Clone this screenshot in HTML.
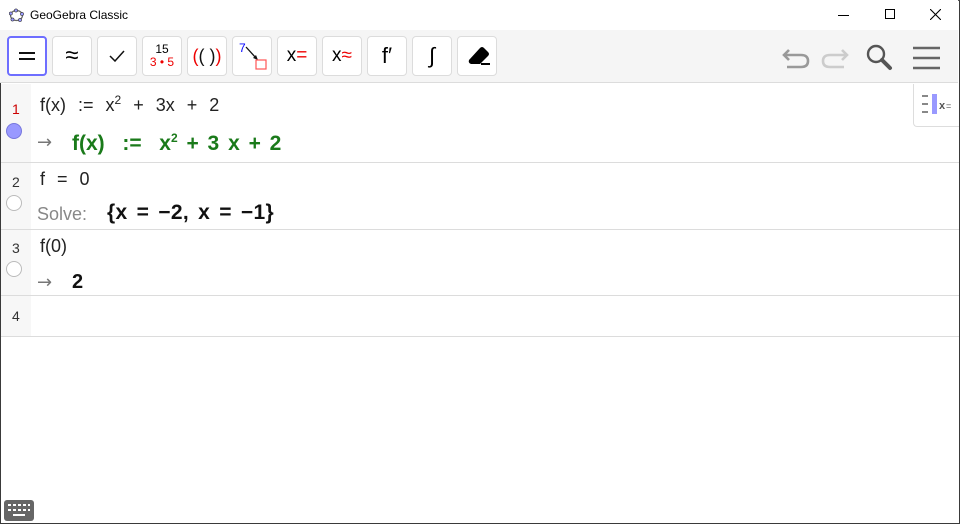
<!DOCTYPE html>
<html><head><meta charset="utf-8"><style>
*{margin:0;padding:0;box-sizing:border-box}
body{width:960px;height:524px;overflow:hidden;background:#fff;font-family:"Liberation Sans",sans-serif;position:relative}
.win{position:absolute;left:0;top:0;width:960px;height:524px;border:1px solid #3a3a3a;border-top-color:#555}
.title{position:absolute;left:0;top:0;width:958px;height:30px;background:#fff}
.title span{position:absolute;left:30px;top:8px;font-size:12px;color:#000}
.tb{position:absolute;left:0;top:30px;width:958px;height:53px;background:#f5f5f5;border-bottom:1px solid #dcdcdc}
.b{position:absolute;top:6px;width:40px;height:40px;border:1px solid #dcdcdc;border-radius:4px;background:#fff;display:flex;align-items:center;justify-content:center;font-size:19px}
.b.sel{border:2px solid #6e6eff}
.gut{position:absolute;left:1px;top:84px;width:30px;height:252px;background:#f7f7f7}
.row{position:absolute;left:1px;width:958px;border-bottom:1px solid #dcdcdc}
.num{position:absolute;left:11px;font-size:14px;color:#333}
.t{position:absolute;left:39px;font-size:18px;color:#222;white-space:pre}
.circ{position:absolute;left:5px;width:16px;height:16px;border-radius:50%;border:1px solid #bbb;background:#fff}
.arr{position:absolute;left:36px;font-size:18px;color:#777;font-family:"DejaVu Sans",sans-serif}
sup{font-size:12px}
</style></head><body>
<div class="win"></div>
<div class="title">
<svg style="position:absolute;left:9px;top:8px" width="15" height="14" viewBox="0 0 15 14"><ellipse cx="7.5" cy="7.5" rx="6" ry="5" fill="none" stroke="#666" stroke-width="1.2"/><g fill="#99f" stroke="#333" stroke-width=".6"><circle cx="7" cy="2.5" r="1.6"/><circle cx="13" cy="6" r="1.6"/><circle cx="11" cy="12" r="1.6"/><circle cx="3.5" cy="11.5" r="1.6"/><circle cx="1.8" cy="5.5" r="1.6"/></g></svg>
<span>GeoGebra Classic</span>
<div style="position:absolute;left:838px;top:15px;width:11px;height:1px;background:#000"></div>
<div style="position:absolute;left:885px;top:9px;width:10px;height:10px;border:1px solid #000"></div>
<svg style="position:absolute;left:930px;top:9px" width="11" height="11"><path d="M0 0L11 11M11 0L0 11" stroke="#000" stroke-width="1.1"/></svg>
</div>
<div class="tb">
<div class="b sel" style="left:7px"><svg width="18" height="10"><path d="M1 2H17M1 8H17" stroke="#111" stroke-width="2"/></svg></div>
<div class="b" style="left:52px;font-size:24px">≈</div>
<div class="b" style="left:97px"><svg width="16" height="12"><path d="M1 6L6 11L15 1" fill="none" stroke="#111" stroke-width="1.5"/></svg></div>
<div class="b" style="left:142px;flex-direction:column;font-size:12px;line-height:13px"><span>15</span><span style="color:#e00">3 • 5</span></div>
<div class="b" style="left:187px;color:#e00;font-size:18px">(<span style="color:#111">( )</span>)</div>
<div class="b" style="left:232px"><svg width="40" height="40"><text x="6" y="16" font-size="12" fill="#00f" font-family="Liberation Sans">7</text><path d="M13 11L23 22" stroke="#111" stroke-width="1.3"/><path d="M20 22L25 24L23 19Z" fill="#111"/><rect x="23" y="24" width="10" height="9" fill="none" stroke="#f55" stroke-width="1.2"/></svg></div>
<div class="b" style="left:277px">x<span style="color:#e00">=</span></div>
<div class="b" style="left:322px">x<span style="color:#e00">≈</span></div>
<div class="b" style="left:367px;font-size:22px">f′</div>
<div class="b" style="left:412px;font-size:22px">∫</div>
<div class="b" style="left:457px"><svg width="32" height="26"><path d="M8 17L19 5Q21 3 23 5L27 9Q29 11 27 13L19 21H10Q7 20 8 17Z" fill="#000"/><path d="M20 21H29" stroke="#000" stroke-width="2"/></svg></div>
<svg style="position:absolute;left:781px;top:15px" width="32" height="26"><path d="M8 5L3 10L8 15M3 10H20Q27 10 27 16Q27 22 20 22H6" fill="none" stroke="#999" stroke-width="2.6"/></svg>
<svg style="position:absolute;left:818px;top:15px" width="32" height="26"><path d="M24 5L29 10L24 15M29 10H12Q5 10 5 16Q5 22 12 22H26" fill="none" stroke="#ccc" stroke-width="2.6"/></svg>
<svg style="position:absolute;left:864px;top:13px" width="32" height="30"><circle cx="12" cy="11" r="8" fill="none" stroke="#555" stroke-width="2.4"/><path d="M18 17L26 25" stroke="#555" stroke-width="4" stroke-linecap="round"/></svg>
<svg style="position:absolute;left:912px;top:16px" width="30" height="24"><path d="M1 2H28M1 12H28M1 22H28" stroke="#666" stroke-width="2.6"/></svg>
</div>
<div class="gut"></div>
<div style="position:absolute;left:913px;top:84px;width:46px;height:43px;background:#fff;border-left:1px solid #ddd;border-bottom:1px solid #ddd;border-radius:0 0 0 4px"><svg width="46" height="43"><path d="M8 12H14M8 20H14M8 28H14" stroke="#888" stroke-width="2"/><rect x="18" y="10" width="5" height="20" fill="#99f"/><text x="25" y="25" font-size="11" font-weight="bold" fill="#555" font-family="Liberation Sans">x</text><text x="32" y="25" font-size="9" fill="#555" font-family="Liberation Sans">=</text></svg></div>
<div class="row" style="top:84px;height:79px">
<div class="num" style="top:17px;color:#c00">1</div>
<div class="circ" style="top:39px;background:#99f;border-color:#77d"></div>
<div class="t" style="top:9px;word-spacing:1px">f(x)  :=  x<sup>2</sup>  +  3x  +  2</div>
<div class="arr" style="top:48px">→</div>
<div class="t" style="top:47px;left:71px;color:#1a7a1a;font-weight:bold;font-size:21px;word-spacing:3px">f(x)  :=  x<sup>2</sup> + 3 x + 2</div>
</div>
<div class="row" style="top:163px;height:67px">
<div class="num" style="top:11px">2</div>
<div class="circ" style="top:32px"></div>
<div class="t" style="top:6px;word-spacing:1px">f  =  0</div>
<div class="t" style="top:41px;left:36px;color:#888">Solve:</div>
<div class="t" style="top:38px;left:106px;color:#111;font-weight:bold;font-size:21px;word-spacing:3px;letter-spacing:.3px">{x = −2, x = −1}</div>
</div>
<div class="row" style="top:230px;height:66px">
<div class="num" style="top:10px">3</div>
<div class="circ" style="top:31px"></div>
<div class="t" style="top:6px">f(0)</div>
<div class="arr" style="top:42px">→</div>
<div class="t" style="top:41px;left:71px;font-weight:bold;font-size:20px;color:#111">2</div>
</div>
<div class="row" style="top:296px;height:41px">
<div class="num" style="top:12px">4</div>
</div>
<div style="position:absolute;left:4px;top:500px;width:30px;height:21px;background:#666;border-radius:3px"><svg width="30" height="21"><g fill="#fff"><rect x="4" y="4" width="3" height="2"/><rect x="9" y="4" width="3" height="2"/><rect x="14" y="4" width="3" height="2"/><rect x="19" y="4" width="3" height="2"/><rect x="24" y="4" width="2" height="2"/><rect x="4" y="9" width="3" height="2"/><rect x="9" y="9" width="3" height="2"/><rect x="14" y="9" width="3" height="2"/><rect x="19" y="9" width="3" height="2"/><rect x="24" y="9" width="2" height="2"/><rect x="9" y="14" width="12" height="2"/></g></svg></div>
</body></html>
